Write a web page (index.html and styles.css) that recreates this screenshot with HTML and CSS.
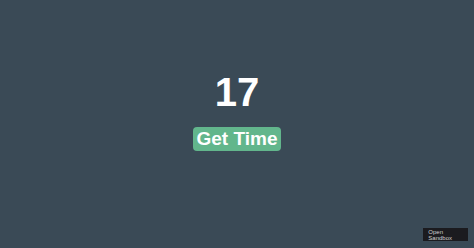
FILE: index.html
```html
<!DOCTYPE html>
<html>
<head>
<meta charset="utf-8">
<link rel="stylesheet" href="styles.css">
</head>
<body>
<main class="app">
  <div class="count">17</div>
  <button class="btn">Get Time</button>
</main>
<a class="sandbox">Open<br>Sandbox</a>
</body>
</html>
```
FILE: styles.css
```css
html, body {
  margin: 0;
  height: 100%;
}
body {
  background: #3a4a56;
  font-family: "Liberation Sans", Arial, sans-serif;
}
.app {
  height: 100%;
  display: flex;
  flex-direction: column;
  align-items: center;
  justify-content: center;
  padding-bottom: 28px;
  box-sizing: border-box;
}
.count {
  color: #ffffff;
  font-weight: bold;
  font-size: 40px;
  line-height: 46px;
  margin-bottom: 12px;
}
.btn {
  background: #62b68c;
  color: #ffffff;
  border: none;
  border-radius: 4px;
  font-family: "Liberation Sans", Arial, sans-serif;
  font-weight: bold;
  font-size: 19px;
  line-height: 24px;
  padding: 0 4px;
}
.sandbox {
  position: fixed;
  right: 6px;
  bottom: 7px;
  background: #1b1b1f;
  color: #d0d0d0;
  font-family: "Liberation Sans", Arial, sans-serif;
  font-size: 6px;
  line-height: 6px;
  padding: 0.5px 16px 0.5px 5px;
}
```
